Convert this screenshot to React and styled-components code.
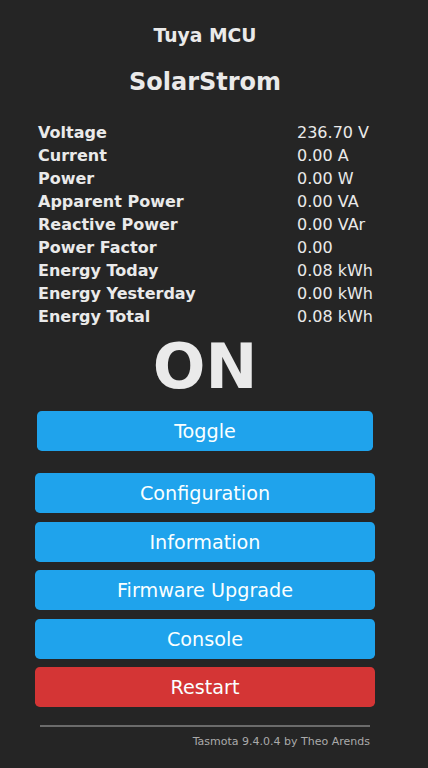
import React from "react";
import styled, { createGlobalStyle } from "styled-components";

const COLORS = {
  bg: "#252525",
  text: "#eaeaea",
  button: "#1fa3ec",
  buttonText: "#faffff",
  danger: "#d43535",
  muted: "#aaaaaa",
};

const GlobalStyle = createGlobalStyle`
  html, body {
    margin: 0;
    padding: 0;
    background: ${COLORS.bg};
  }
  body {
    font-family: "DejaVu Sans", Verdana, sans-serif;
    color: ${COLORS.text};
  }
`;

const READINGS = [
  ["Voltage", "236.70 V"],
  ["Current", "0.00 A"],
  ["Power", "0.00 W"],
  ["Apparent Power", "0.00 VA"],
  ["Reactive Power", "0.00 VAr"],
  ["Power Factor", "0.00"],
  ["Energy Today", "0.08 kWh"],
  ["Energy Yesterday", "0.00 kWh"],
  ["Energy Total", "0.08 kWh"],
];

const MENU = [
  { label: "Configuration" },
  { label: "Information" },
  { label: "Firmware Upgrade" },
  { label: "Console" },
  { label: "Restart", danger: true },
];

const App = () => {
  return (
    <>
      <GlobalStyle />
      <Page>
        <Panel>
          <Header>
            <Module>Tuya MCU</Module>
            <DeviceName>SolarStrom</DeviceName>
          </Header>

          <Readings>
            {READINGS.map(([label, value]) => (
              <Reading key={label}>
                <ReadingLabel>{label}</ReadingLabel>
                <ReadingValue>{value}</ReadingValue>
              </Reading>
            ))}
          </Readings>

          <PowerState>ON</PowerState>
          <ToggleRow>
            <Button>Toggle</Button>
          </ToggleRow>

          <Menu>
            {MENU.map((item) => (
              <Button key={item.label} $danger={item.danger}>
                {item.label}
              </Button>
            ))}
          </Menu>

          <Footer>
            <Rule />
            <Credit>Tasmota 9.4.0.4 by Theo Arends</Credit>
          </Footer>
        </Panel>
      </Page>
    </>
  );
};

const Page = styled.div`
  min-height: 768px;
  padding-left: 35px;
`;

const Panel = styled.div`
  width: 340px;
  display: flex;
  flex-direction: column;
`;

const Header = styled.header`
  display: flex;
  flex-direction: column;
  align-items: center;
  padding-top: 25px;
`;

const Module = styled.h3`
  margin: 0;
  font-size: 18.72px;
  line-height: 22px;
  font-weight: 700;
`;

const DeviceName = styled.h2`
  margin: 21px 0 0;
  font-size: 24px;
  line-height: 28px;
  font-weight: 700;
`;

const Readings = styled.div`
  margin-top: 25px;
  display: flex;
  flex-direction: column;
`;

const Reading = styled.div`
  display: grid;
  grid-template-columns: 262px 1fr;
  height: 23px;
  align-items: center;
  font-size: 16px;
`;

const ReadingLabel = styled.span`
  padding-left: 3px;
  font-weight: 700;
`;

const ReadingValue = styled.span`
  font-weight: 400;
`;

const PowerState = styled.div`
  margin-top: 3px;
  text-align: center;
  font-size: 62px;
  line-height: 72px;
  font-weight: 700;
`;

const ToggleRow = styled.div`
  margin-top: 8px;
  padding: 0 2px;
`;

const Menu = styled.nav`
  margin-top: 22px;
  display: flex;
  flex-direction: column;
  gap: 8.5px;
`;

const Button = styled.button`
  display: block;
  width: 100%;
  height: 40px;
  border: 0;
  border-radius: 0.3rem;
  background: ${(p) => (p.$danger ? COLORS.danger : COLORS.button)};
  color: ${COLORS.buttonText};
  font-family: inherit;
  font-size: 19.2px;
  line-height: 40px;
  padding: 1px 0 0;
  cursor: pointer;
`;

const Footer = styled.footer`
  margin-top: 18px;
  padding: 0 5px;
  display: flex;
  flex-direction: column;
  align-items: flex-end;
`;

const Rule = styled.hr`
  width: 100%;
  margin: 0;
  border: 0;
  border-top: 2px solid #6b6b6b;
`;

const Credit = styled.div`
  margin-top: 8px;
  font-size: 11px;
  color: ${COLORS.muted};
`;

export default App;
